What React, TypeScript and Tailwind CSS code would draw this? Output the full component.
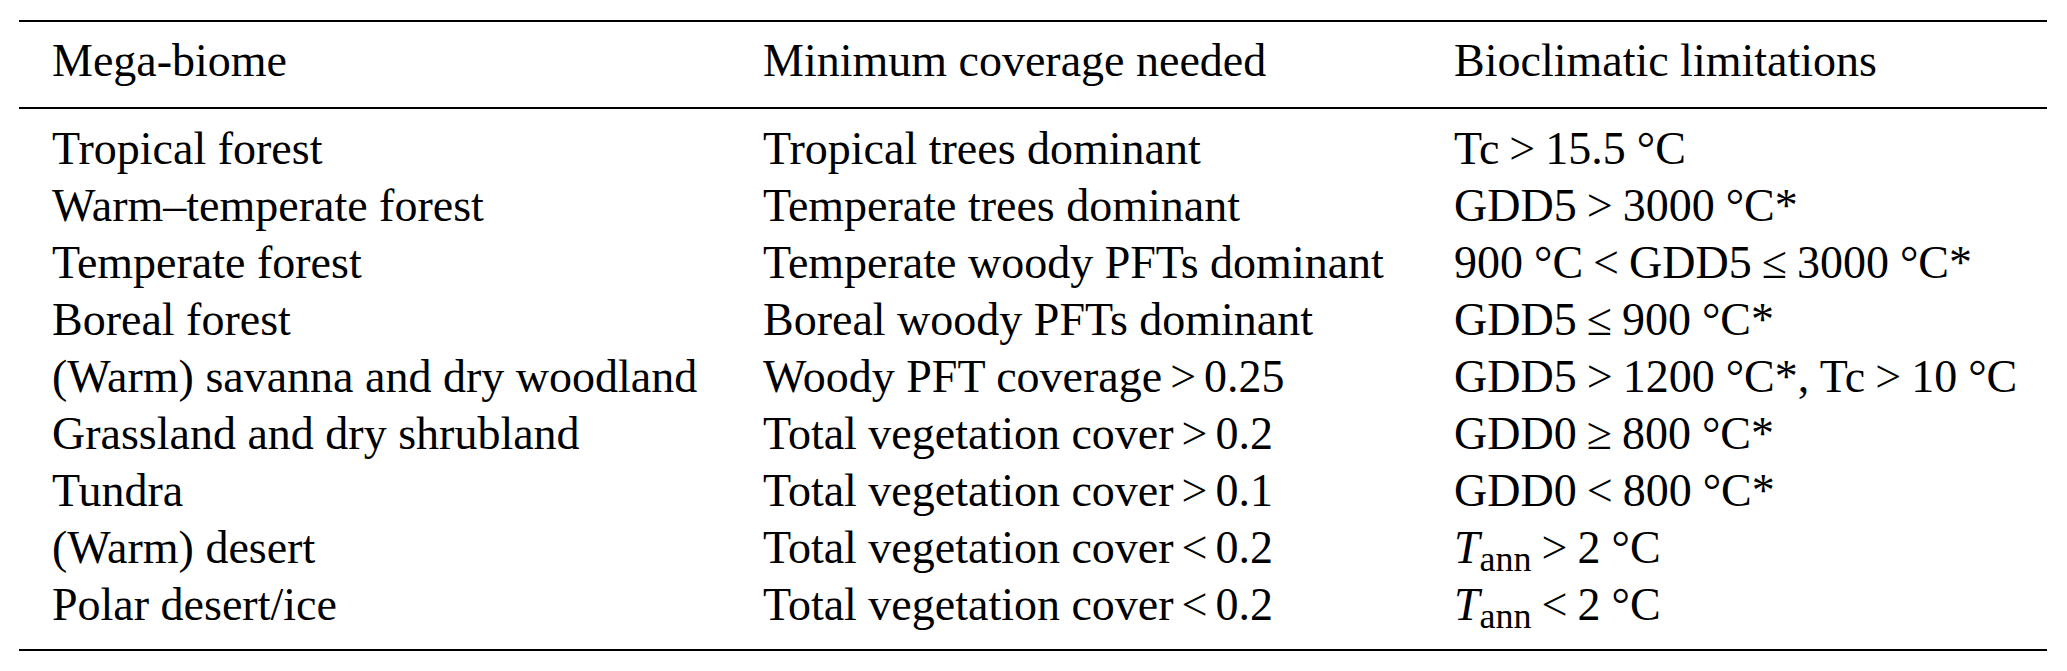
import React from "react";

// small helpers for the math bits in the third column
const Rel = ({ children }: { children: React.ReactNode }) => (
  <span className="mx-[10px]">{children}</span>
);

const Deg = () => <span className="ml-[11px]">°C</span>;

const Tann = () => (
  <span>
    <span className="italic">T</span>
    <span className="text-[36px] relative top-[8px]">ann</span>
  </span>
);

const rows: [string, string, React.ReactNode][] = [
  [
    "Tropical forest",
    "Tropical trees dominant",
    <>Tc<Rel>&gt;</Rel>15.5<Deg /></>,
  ],
  [
    "Warm–temperate forest",
    "Temperate trees dominant",
    <>GDD5<Rel>&gt;</Rel>3000<Deg />*</>,
  ],
  [
    "Temperate forest",
    "Temperate woody PFTs dominant",
    <>900<Deg /><Rel>&lt;</Rel>GDD5<Rel>≤</Rel>3000<Deg />*</>,
  ],
  [
    "Boreal forest",
    "Boreal woody PFTs dominant",
    <>GDD5<Rel>≤</Rel>900<Deg />*</>,
  ],
  [
    "(Warm) savanna and dry woodland",
    "Woody PFT coverage > 0.25",
    <>GDD5<Rel>&gt;</Rel>1200<Deg />*, Tc<Rel>&gt;</Rel>10<Deg /></>,
  ],
  [
    "Grassland and dry shrubland",
    "Total vegetation cover > 0.2",
    <>GDD0<Rel>≥</Rel>800<Deg />*</>,
  ],
  [
    "Tundra",
    "Total vegetation cover > 0.1",
    <>GDD0<Rel>&lt;</Rel>800<Deg />*</>,
  ],
  [
    "(Warm) desert",
    "Total vegetation cover < 0.2",
    <><Tann /><Rel>&gt;</Rel>2<Deg /></>,
  ],
  [
    "Polar desert/ice",
    "Total vegetation cover < 0.2",
    <><Tann /><Rel>&lt;</Rel>2<Deg /></>,
  ],
];

// the middle column uses thin spacing round the relation signs too
const Coverage = ({ text }: { text: string }) => {
  const m = text.match(/^(.*) ([<>]) (.*)$/);
  if (!m) return <>{text}</>;
  return (
    <>
      {m[1]}
      <span className="mx-[8px]">{m[2]}</span>
      {m[3]}
    </>
  );
};

export default function App() {
  return (
    <div className="min-h-screen bg-white text-black font-['Liberation_Serif','Times_New_Roman',serif] text-[46px] leading-[57px]">
      <div className="ml-[19px] mr-[20px] pt-[20px]">
        <div className="border-t-2 border-b-2 border-black">
          <div className="grid grid-cols-[711px_691px_1fr] pl-[33px] pt-[10px] pb-[18px] border-b-2 border-black">
            <div>Mega-biome</div>
            <div>Minimum coverage needed</div>
            <div>Bioclimatic limitations</div>
          </div>
          <div className="pt-[11px] pb-[16px]">
            {rows.map(([biome, cover, limit]) => (
              <div
                key={biome}
                className="grid grid-cols-[711px_691px_1fr] pl-[33px] h-[57px] whitespace-nowrap"
              >
                <div>{biome}</div>
                <div>
                  <Coverage text={cover} />
                </div>
                <div>{limit}</div>
              </div>
            ))}
          </div>
        </div>
      </div>
    </div>
  );
}
